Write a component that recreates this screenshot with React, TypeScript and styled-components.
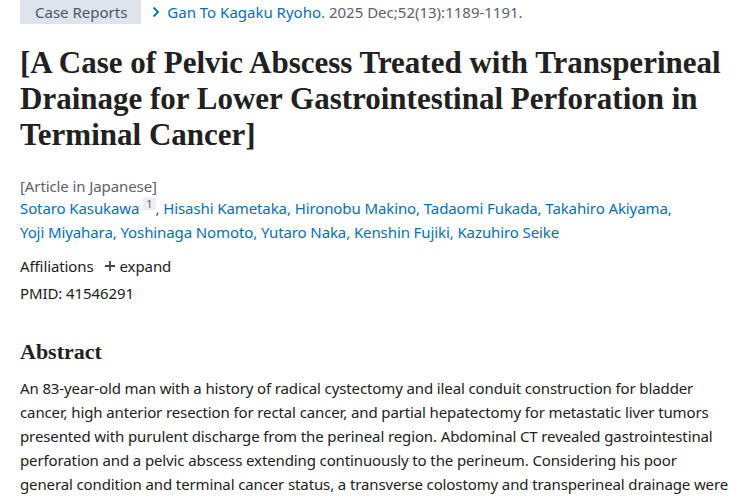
import styled, { createGlobalStyle } from "styled-components";

const GlobalStyle = createGlobalStyle`
    html, body {
        margin: 0;
        padding: 0;
        background: #ffffff;
    }
    body {
        font-family: "Noto Sans", "Open Sans", sans-serif;
        color: #212121;
        overflow: hidden;
    }
`;

const Page = styled.main`
    width: 750px;
    height: 500px;
    padding: 0 20px;
    box-sizing: border-box;
    overflow: hidden;
`;

const TopRow = styled.div`
    display: flex;
    align-items: center;
    height: 24px;
    gap: 10px;
    font-size: 15px;
`;

const TypeTag = styled.span`
    display: flex;
    align-items: center;
    height: 24px;
    padding: 0 14px 0 15px;
    background-color: #dfe3ec;
    color: #4b5563;
`;

const Citation = styled.span`
    display: flex;
    align-items: center;
    gap: 6px;
    color: #5b616b;
`;

const JournalLink = styled.a`
    color: #0071bc;
    text-decoration: none;
`;

const Title = styled.h1`
    margin: 21px 0 0;
    font-family: "Liberation Serif", "DejaVu Serif", serif;
    font-weight: 700;
    font-size: 31px;
    line-height: 36px;
    color: #212121;
`;

const Meta = styled.div`
    margin-top: 23px;
    font-size: 15px;
    line-height: 24px;
    letter-spacing: -0.1px;
`;

const Language = styled.div`
    color: #5b616b;
    line-height: 20px;
`;

const Authors = styled.div`
    color: #0071bc;
`;

const Author = styled.span`
    white-space: nowrap;
`;

const Sup = styled.sup`
    display: inline-block;
    background: #eceef1;
    color: #5b616b;
    font-size: 11px;
    line-height: 13px;
    padding: 0 3px;
    margin: 0 0 0 4px;
    vertical-align: 6px;
    border-radius: 2px;
`;

const Row = styled.div<{ $gap?: number }>`
    display: flex;
    align-items: center;
    gap: ${(p) => p.$gap ?? 0}px;
    margin-top: ${(p) => (p.$gap ? 10 : 3)}px;
    line-height: 24px;
`;

const Expand = styled.span`
    display: flex;
    align-items: center;
    gap: 4px;
`;

const SectionTitle = styled.h2`
    margin: 32px 0 0;
    font-family: "Liberation Serif", "DejaVu Serif", serif;
    font-weight: 700;
    font-size: 22px;
    line-height: 30px;
`;

const Paragraph = styled.p`
    margin: 9px 0 0;
    font-size: 15px;
    line-height: 24px;
    letter-spacing: -0.12px;
`;

const authors = [
    "Hisashi Kametaka",
    "Hironobu Makino",
    "Tadaomi Fukada",
    "Takahiro Akiyama",
    "Yoji Miyahara",
    "Yoshinaga Nomoto",
    "Yutaro Naka",
    "Kenshin Fujiki",
    "Kazuhiro Seike",
];

function Chevron() {
    return (
        <svg width="10" height="12" viewBox="0 0 10 12">
            <path d="M2.5 1.5 L7 6 L2.5 10.5" fill="none" stroke="#0071bc" strokeWidth="1.8" />
        </svg>
    );
}

function Plus() {
    return (
        <svg width="12" height="12" viewBox="0 0 12 12">
            <path d="M6 1 V11 M1 6 H11" stroke="#444" strokeWidth="1.8" />
        </svg>
    );
}

function App() {
    return (
        <Page>
            <GlobalStyle />
            <TopRow>
                <TypeTag>Case Reports</TypeTag>
                <Citation>
                    <Chevron />
                    <span>
                        <JournalLink href="#">Gan To Kagaku Ryoho.</JournalLink> 2025 Dec;52(13):1189-1191.
                    </span>
                </Citation>
            </TopRow>
            <Title>
                [A Case of Pelvic Abscess Treated with Transperineal Drainage for Lower Gastrointestinal
                Perforation in Terminal Cancer]
            </Title>
            <Meta>
                <Language>[Article in Japanese]</Language>
                <Authors>
                    <Author>
                        Sotaro Kasukawa<Sup>1</Sup>,
                    </Author>{" "}
                    {authors.map((name, i) => (
                        <span key={name}>
                            <Author>
                                {name}
                                {i === authors.length - 1 ? "" : ","}
                            </Author>{" "}
                        </span>
                    ))}
                </Authors>
                <Row $gap={10}>
                    <span>Affiliations</span>
                    <Expand>
                        <Plus />
                        expand
                    </Expand>
                </Row>
                <Row>PMID: 41546291</Row>
            </Meta>
            <SectionTitle>Abstract</SectionTitle>
            <Paragraph>
                An 83-year-old man with a history of radical cystectomy and ileal conduit construction for
                bladder cancer, high anterior resection for rectal cancer, and partial hepatectomy for
                metastatic liver tumors presented with purulent discharge from the perineal region.
                Abdominal CT revealed gastrointestinal perforation and a pelvic abscess extending
                continuously to the perineum. Considering his poor general condition and terminal cancer
                status, a transverse colostomy and transperineal drainage were performed.
            </Paragraph>
        </Page>
    );
}

export default App;
